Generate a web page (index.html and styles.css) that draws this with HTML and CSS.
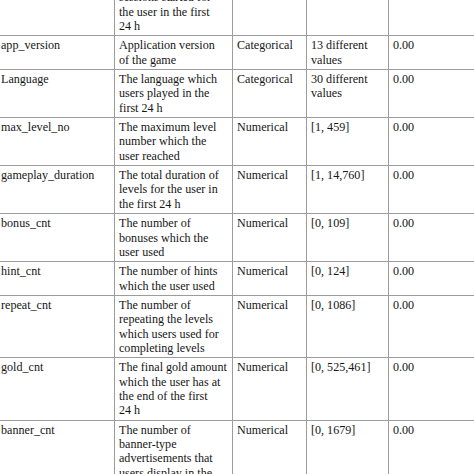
FILE: index.html
```html
<!DOCTYPE html>
<html>
<head>
<meta charset="utf-8">
<link rel="stylesheet" href="styles.css">
</head>
<body>
<div class="page">
<table class="vars">
  <colgroup>
    <col class="c-name"><col class="c-desc"><col class="c-type"><col class="c-range"><col class="c-miss">
  </colgroup>
  <tbody>
    <tr><td>session_cnt</td><td class="desc">The number of<br>sessions started for<br>the user in the first<br>24&nbsp;h</td><td></td><td></td><td></td></tr>
    <tr><td>app_version</td><td class="desc">Application version<br>of the game</td><td>Categorical</td><td>13 different values</td><td>0.00</td></tr>
    <tr><td>Language</td><td class="desc">The language which<br>users played in the<br>first 24&nbsp;h</td><td>Categorical</td><td>30 different values</td><td>0.00</td></tr>
    <tr><td>max_level_no</td><td class="desc">The maximum level<br>number which the<br>user reached</td><td>Numerical</td><td>[1, 459]</td><td>0.00</td></tr>
    <tr><td>gameplay_duration</td><td class="desc">The total duration of<br>levels for the user in<br>the first 24&nbsp;h</td><td>Numerical</td><td>[1, 14,760]</td><td>0.00</td></tr>
    <tr><td>bonus_cnt</td><td class="desc">The number of<br>bonuses which the<br>user used</td><td>Numerical</td><td>[0, 109]</td><td>0.00</td></tr>
    <tr><td>hint_cnt</td><td class="desc">The number of hints<br>which the user used</td><td>Numerical</td><td>[0, 124]</td><td>0.00</td></tr>
    <tr><td>repeat_cnt</td><td class="desc">The number of<br>repeating the levels<br>which users used for<br>completing levels</td><td>Numerical</td><td>[0, 1086]</td><td>0.00</td></tr>
    <tr><td>gold_cnt</td><td class="desc">The final gold amount<br>which the user has at<br>the end of the first<br>24&nbsp;h</td><td>Numerical</td><td>[0, 525,461]</td><td>0.00</td></tr>
    <tr><td>banner_cnt</td><td class="desc">The number of<br>banner-type<br>advertisements that<br>users display in the<br>first 24&nbsp;h</td><td>Numerical</td><td>[0, 1679]</td><td>0.00</td></tr>
  </tbody>
</table>
</div>
</body>
</html>
```
FILE: styles.css
```css
html, body {
  margin: 0;
  padding: 0;
  background: #fff;
  overflow: hidden;
}
.page {
  width: 474px;
  height: 474px;
  overflow: hidden;
}
.vars {
  border-collapse: collapse;
  table-layout: fixed;
  width: 600px;
  margin-top: -27px;
  margin-left: -4px;
  font-family: "Liberation Serif", "Times New Roman", serif;
  font-size: 12.1px;
  line-height: 14.35px;
  color: #161616;
}
.c-name { width: 118px; }
.c-desc { width: 118px; }
.c-type { width: 74px; }
.c-range { width: 82px; }
.c-miss { width: 208px; }
.vars td {
  border: 1px solid #9c9c9c;
  padding: 2px 4px 2px 4px;
  vertical-align: top;
  text-align: left;
}
.vars td.desc {
  white-space: nowrap;
}
```
